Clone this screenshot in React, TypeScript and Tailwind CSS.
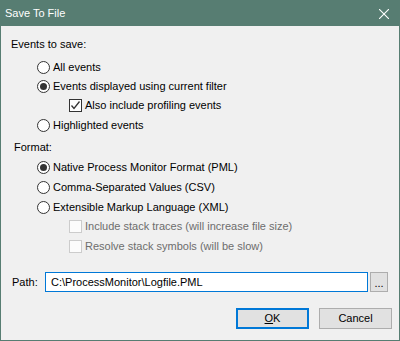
import React from "react";

const Radio = ({ checked }: { checked?: boolean }) => (
  <span className="w-[13px] h-[13px] rounded-full border border-[#333333] bg-white flex items-center justify-center shrink-0">
    {checked && <span className="w-[7px] h-[7px] rounded-full bg-[#333333]" />}
  </span>
);

const Check = ({ checked, disabled }: { checked?: boolean; disabled?: boolean }) => (
  <span
    className={
      disabled
        ? "w-[13px] h-[13px] border border-[#cccccc] bg-[#fcfcfc] flex items-center justify-center shrink-0"
        : "w-[13px] h-[13px] border border-[#333333] bg-white flex items-center justify-center shrink-0"
    }
  >
    {checked && (
      <svg width="11" height="11" viewBox="0 0 11 11">
        <path d="M1.5 5.5 L4 8.5 L9.5 1.5" fill="none" stroke="#333333" strokeWidth="1.3" />
      </svg>
    )}
  </span>
);

export default function App() {
  return (
    <div
      className="w-[400px] h-[341px] bg-[#f0f0f0] border border-[#577d72] flex flex-col text-[11px] text-black"
      style={{ fontFamily: '"Liberation Sans", Arial, sans-serif' }}
    >
      <div className="h-[25px] bg-[#577d72] flex items-center justify-between shrink-0">
        <span className="ml-[4px] text-white text-[11px]">Save To File</span>
        <svg width="10" height="10" viewBox="0 0 10 10" className="mr-[10px]">
          <path d="M0 0 L10 10 M10 0 L0 10" stroke="#ffffff" strokeWidth="1.1" />
        </svg>
      </div>
      <div className="flex flex-col">
        <div className="h-[20px] mt-[8px] flex items-center ml-[10px]">Events to save:</div>
        <div className="h-[20px] mt-[3px] flex items-center ml-[36px] gap-[3px]">
          <Radio />
          <span>All events</span>
        </div>
        <div className="h-[19px] flex items-center ml-[36px] gap-[3px]">
          <Radio checked />
          <span>Events displayed using current filter</span>
        </div>
        <div className="h-[19px] flex items-center ml-[68px] gap-[3px]">
          <Check checked />
          <span>Also include profiling events</span>
        </div>
        <div className="h-[20px] flex items-center ml-[36px] gap-[3px]">
          <Radio />
          <span>Highlighted events</span>
        </div>
        <div className="h-[20px] mt-[2px] flex items-center ml-[13px]">Format:</div>
        <div className="h-[20px] flex items-center ml-[36px] gap-[3px]">
          <Radio checked />
          <span>Native Process Monitor Format (PML)</span>
        </div>
        <div className="h-[20px] flex items-center ml-[36px] gap-[3px]">
          <Radio />
          <span>Comma-Separated Values (CSV)</span>
        </div>
        <div className="h-[20px] flex items-center ml-[36px] gap-[3px]">
          <Radio />
          <span>Extensible Markup Language (XML)</span>
        </div>
        <div className="h-[19px] flex items-center ml-[68px] gap-[3px] text-[#6d6d6d]">
          <Check disabled />
          <span>Include stack traces (will increase file size)</span>
        </div>
        <div className="h-[20px] flex items-center ml-[68px] gap-[3px] text-[#6d6d6d]">
          <Check disabled />
          <span>Resolve stack symbols (will be slow)</span>
        </div>
        <div className="h-[20px] mt-[16px] flex items-center">
          <span className="ml-[11px] w-[33px]">Path:</span>
          <div className="w-[323px] h-[20px] border border-[#0078d7] bg-white flex items-center pl-[5px]">
            C:\ProcessMonitor\Logfile.PML
          </div>
          <div className="ml-[2px] w-[18px] h-[20px] border border-[#adadad] bg-[#e1e1e1] flex items-end justify-center pb-[2px] leading-none">
            ...
          </div>
        </div>
        <div className="mt-[16px] flex justify-end pr-[7px] gap-[10px]">
          <div className="w-[73px] h-[21px] border-2 border-[#0078d7] bg-[#e1e1e1] flex items-center justify-center">
            <span>
              <span className="underline">O</span>K
            </span>
          </div>
          <div className="w-[73px] h-[21px] border border-[#adadad] bg-[#e1e1e1] flex items-center justify-center">
            Cancel
          </div>
        </div>
      </div>
    </div>
  );
}
